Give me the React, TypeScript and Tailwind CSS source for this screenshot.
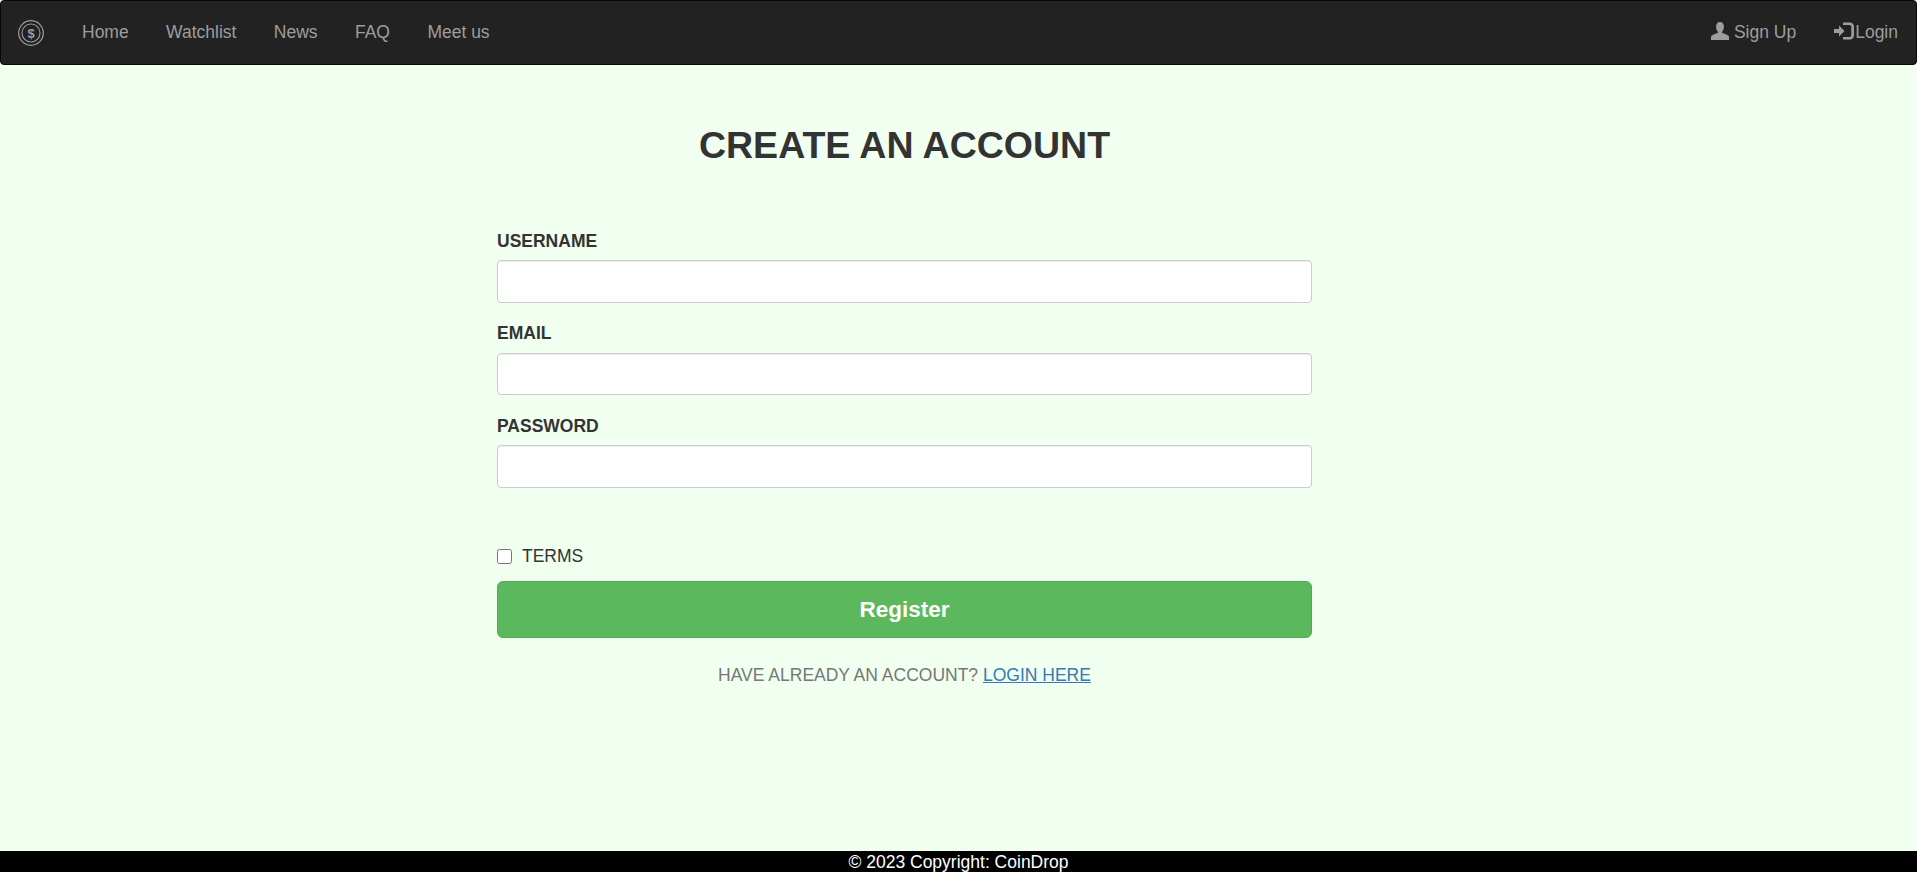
import React from "react";

const Coin = () => (
  <svg width="26" height="26" viewBox="0 0 26 26" fill="none" stroke="#9d9d9d">
    <circle cx="13" cy="13" r="12.3" strokeWidth="1.2" />
    <circle cx="13" cy="13" r="9" strokeWidth="1.1" />
    <text x="13" y="17.500" textAnchor="middle" fontSize="13" fontWeight="700" fontFamily="'Liberation Sans', sans-serif" fill="#9d9d9d" stroke="none">$</text>
  </svg>
);

const UserIcon = () => (
  <svg width="18" height="18" viewBox="0 0 18 18" fill="#9d9d9d" className="-translate-y-[2px]">
    <path d="M9 0c2.400 0 3.900 1.900 3.900 4.800 0 2-.7 3.800-1.600 4.800-.5.500-.4 1.200.3 1.500l4.300 1.700c1.100.5 2.100 1.100 2.100 2.200V18H0v-2.900c0-1.100 1-1.800 2.100-2.300l4.300-1.700c.7-.3.800-1 .3-1.500C5.800 8.600 5.100 6.800 5.100 4.800 5.100 1.900 6.600 0 9 0z" />
  </svg>
);

const LoginIcon = () => (
  <svg width="20" height="18" viewBox="0 0 20 18" fill="#9d9d9d" className="-translate-y-[2px]">
    <path d="M0 7h5V3.500L10.500 9 5 14.500V11H0z" />
    <path d="M9 0.500H16c2.200 0 4 1.800 4 4v9c0 2.200-1.800 4-4 4H9v-2.500h6.500c1 0 1.800-.8 1.800-1.800v-8.400c0-1-.8-1.800-1.800-1.800H9z" />
  </svg>
);

const Field = ({ label, type }: { label: string; type: string }) => (
  <div className="flex flex-col">
    <label className="mb-[9.5px] h-[20px] text-[17.5px] leading-[20px] font-bold text-[#333]">{label}</label>
    <input type={type} className="h-[42.5px] w-full rounded-[4px] border border-[#ccc] bg-white shadow-[inset_0_1px_1px_rgba(0,0,0,0.075)]" />
  </div>
);

export default function App() {
  return (
    <div className="flex min-h-[872px] flex-col bg-[#f0fff0] font-['Liberation_Sans',Arial,sans-serif] text-[#333]">
      <nav className="flex h-[65px] items-center justify-between rounded-[4px] border border-[#080808] bg-[#222] text-[17.5px] text-[#9d9d9d]">
        <div className="flex items-center">
          <div className="ml-[17px] mr-[38px] flex"><Coin /></div>
          <div className="flex items-center gap-[37.4px]">
            <a>Home</a>
            <a>Watchlist</a>
            <a>News</a>
            <a>FAQ</a>
            <a>Meet us</a>
          </div>
        </div>
        <div className="flex items-center gap-[38px] pr-[18px]">
          <a className="flex items-center gap-[5px]"><UserIcon />Sign Up</a>
          <a className="flex items-center gap-[1px]"><LoginIcon />Login</a>
        </div>
      </nav>

      <main className="flex-1">
        <div className="ml-[497px] w-[815px]">
          <h1 className="mt-[59px] text-center text-[37.5px] leading-[43px] font-bold text-[#333]">CREATE AN ACCOUNT</h1>
          <form className="mt-[63.5px] flex flex-col gap-[20.5px]">
            <Field label="USERNAME" type="text" />
            <Field label="EMAIL" type="email" />
            <Field label="PASSWORD" type="password" />
          </form>
          <div className="mt-[56.5px] flex h-[22px] items-center">
            <input type="checkbox" className="ml-0 mr-[10px] mt-[2px] h-[15px] w-[15px]" />
            <span className="pt-[2px] text-[17.5px] text-[#333]">TERMS</span>
          </div>
          <button className="mt-[15px] h-[57px] w-full rounded-[6px] border border-[#4cae4c] bg-[#5cb85c] text-[22.5px] font-bold text-white">Register</button>
          <p className="mt-[26px] text-center text-[17.5px] leading-[22px] text-[#777]">
            HAVE ALREADY AN ACCOUNT? <a className="text-[#337ab7] underline">LOGIN HERE</a>
          </p>
        </div>
      </main>

      <footer className="h-[21px] overflow-hidden bg-black text-center text-[17.5px] leading-[23px] text-white">© 2023 Copyright: CoinDrop</footer>
    </div>
  );
}
